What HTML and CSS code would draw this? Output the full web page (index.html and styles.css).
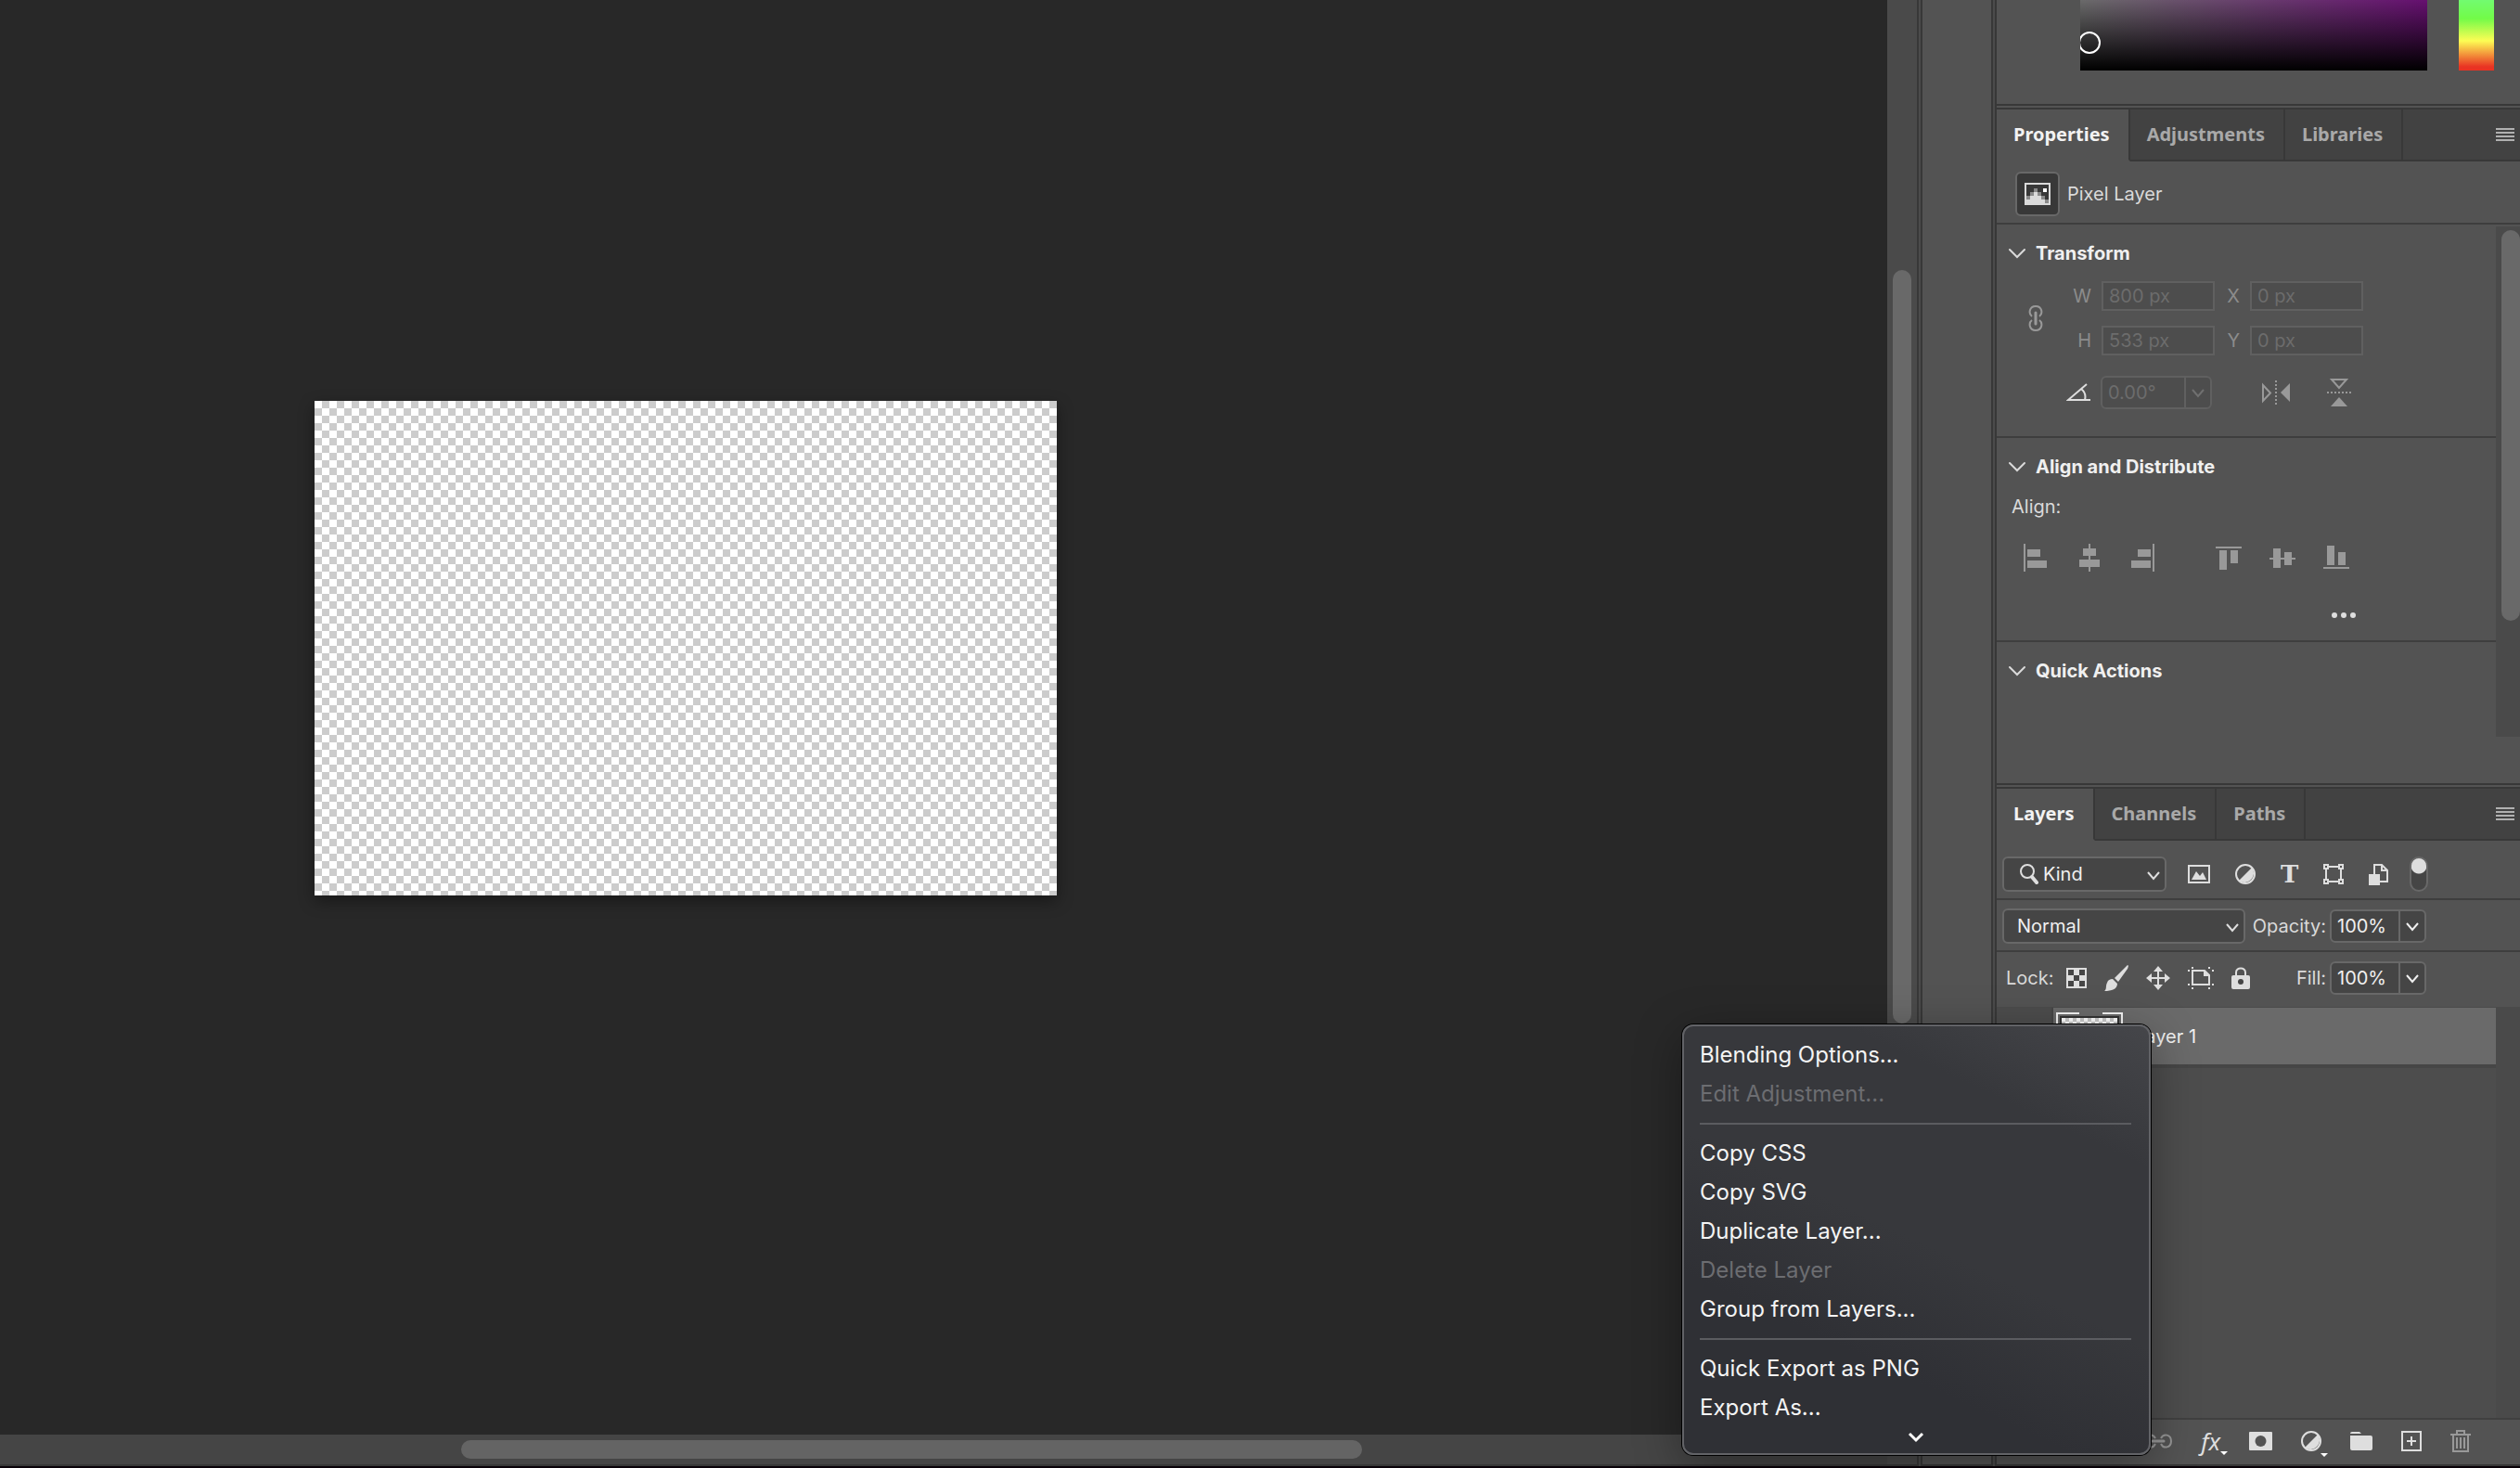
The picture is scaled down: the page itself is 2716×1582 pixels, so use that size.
FILE: index.html
```html
<!DOCTYPE html>
<html lang="en">
<head>
<meta charset="utf-8">
<meta name="viewport" content="width=device-width, initial-scale=1">
<title>Image editor</title>
<link rel="stylesheet" href="styles.css">
</head>
<body>
<div class="app">
  <main class="document">
    <div class="pasteboard"><div class="artboard"></div></div>
    <div class="track track-y"><div class="thumb thumb-y"></div></div>
    <div class="track track-x"><div class="thumb thumb-x"></div></div>
    <div class="track-corner"></div>
  </main>
  <div class="divider"></div>
  <div class="dock"></div>
  <div class="divider"></div>
  <aside class="panels">
    <section class="color-panel" aria-label="Color">
      <div class="color-field"><div class="color-marker"></div></div>
      <div class="hue-strip"></div>
    </section>
    <section class="properties">
      <div class="tabs" role="tablist">
        <button class="tab active" role="tab" aria-selected="true">Properties</button>
        <button class="tab" role="tab">Adjustments</button>
        <button class="tab" role="tab">Libraries</button>
        <button class="panel-menu" aria-label="Properties menu"><svg width="20" height="14"><path d="M0 1h20M0 5h20M0 9h20M0 13h20" stroke="#b0b0b0" stroke-width="2"/></svg></button>
      </div>
      <div class="layer-kind">
        <span class="kind-icon"><svg width="28" height="24" viewBox="0 0 28 24"><path d="M1 1h26v22H1z" fill="none" stroke="#dadada" stroke-width="2"/><path d="M2 22v-4h4v-4h4v-4h4v4h4v4h4v4z" fill="#dadada"/><path d="M10 6h4v4h-4zM6 10h4v4H6zM14 10h4v4h-4zM2 14h4v4H2zM18 14h4v4h-4zM22 18h4v4h-4z" fill="#8a8a8a"/><path d="M20 6h4v4h-4z" fill="#fff"/></svg></span>
        <span>Pixel Layer</span>
      </div>
      <div class="properties-body">
        <div class="property-groups">
          <section class="group transform">
            <button class="group-title"><svg width="18" height="12"><path d="M1 2l8 8 8-8" class="line"/></svg>Transform</button>
            <div class="transform-fields">
              <button class="link-size" aria-label="Link width and height"><svg width="16" height="30" viewBox="0 0 16 30"><path d="M4 13C0 10 1 2 8 2s8 8 4 11M4 17c-4 3-3 11 4 11s8-8 4-11" fill="none" stroke="#999" stroke-width="2"/><path d="M8 9v12" stroke="#999" stroke-width="3" stroke-linecap="round"/></svg></button>
              <label for="w">W</label><input id="w" value="800 px" disabled>
              <label for="x" class="second">X</label><input id="x" value="0 px" disabled>
              <label for="h">H</label><input id="h" value="533 px" disabled>
              <label for="y" class="second">Y</label><input id="y" value="0 px" disabled>
            </div>
            <div class="rotate-row">
              <label for="angle" aria-label="Angle"><svg width="26" height="20" viewBox="0 0 26 20"><path d="M22 1L2 18h24M16 6c4 3 5 8 4 12" fill="none" stroke="#dedede" stroke-width="2"/></svg></label>
              <span class="combo disabled"><input id="angle" value="0.00°" disabled><button disabled aria-label="Angle presets"><svg width="14" height="10"><path d="M1 1l6 7 6-7" class="line"/></svg></button></span>
              <button class="flip-x" aria-label="Flip horizontal"><svg width="30" height="28" viewBox="0 0 30 28"><path d="M1 6v17l8-8.500z" fill="none" stroke="#999" stroke-width="2"/><path d="M30 4v20l-10-10z" fill="#999"/><path d="M15 1v26" stroke="#999" stroke-width="2" stroke-dasharray="2 2"/></svg></button>
              <button aria-label="Flip vertical"><svg width="26" height="30" viewBox="0 0 26 30"><path d="M5 1h16l-8 9z" fill="none" stroke="#999" stroke-width="2"/><path d="M4 30h18l-9-10z" fill="#999"/><path d="M0 15h26" stroke="#999" stroke-width="2" stroke-dasharray="2 2"/></svg></button>
            </div>
          </section>
          <section class="group align">
            <button class="group-title"><svg width="18" height="12"><path d="M1 2l8 8 8-8" class="line"/></svg>Align and Distribute</button>
            <p>Align:</p>
            <div class="align-row">
              <button aria-label="Align left edges"><svg width="30" height="30"><path d="M2 0h2v30H2zM6 6h14v8H6zM6 18h21v8H6z"/></svg></button>
              <button aria-label="Align horizontal centers"><svg width="30" height="30"><path d="M14 0h2v30h-2zM8 5h14v8H8zM4 17h22v8H4z"/></svg></button>
              <button aria-label="Align right edges"><svg width="30" height="30"><path d="M25 0h2v30h-2zM9 6h14v8H9zM2 18h21v8H2z"/></svg></button>
              <button class="split" aria-label="Align top edges"><svg width="30" height="30"><path d="M1 3h28v2H1zM5 7h8v21H5zM17 7h8v14h-8z"/></svg></button>
              <button aria-label="Align vertical centers"><svg width="30" height="30"><path d="M1 15h28v2H1zM5 5h8v21H5zM17 9h8v14h-8z"/></svg></button>
              <button aria-label="Align bottom edges"><svg width="30" height="30"><path d="M1 25h28v2H1zM5 2h8v21H5zM17 9h8v14h-8z"/></svg></button>
            </div>
            <button class="more" aria-label="More options"><svg width="26" height="6"><circle cx="3" cy="3" r="3"/><circle cx="13" cy="3" r="3"/><circle cx="23" cy="3" r="3"/></svg></button>
          </section>
          <section class="group">
            <button class="group-title"><svg width="18" height="12"><path d="M1 2l8 8 8-8" class="line"/></svg>Quick Actions</button>
          </section>
        </div>
        <div class="side-track"><div class="side-thumb"></div></div>
      </div>
    </section>
    <section class="layers">
      <div class="tabs" role="tablist">
        <button class="tab active" role="tab" aria-selected="true">Layers</button>
        <button class="tab" role="tab">Channels</button>
        <button class="tab" role="tab">Paths</button>
        <button class="panel-menu" aria-label="Layers menu"><svg width="20" height="14"><path d="M0 1h20M0 5h20M0 9h20M0 13h20" stroke="#b0b0b0" stroke-width="2"/></svg></button>
      </div>
      <div class="filter-row">
        <div class="picker kind">
          <svg class="lens" width="20" height="22" viewBox="0 0 20 22"><circle cx="8" cy="8" r="7" fill="none" stroke="#dedede" stroke-width="2"/><path d="M13 14l5 6" stroke="#dedede" stroke-width="4" stroke-linecap="round"/></svg>
          <select aria-label="Filter type"><option>Kind</option></select>
          <svg class="arrow" width="14" height="10"><path d="M1 1l6 7 6-7" class="line"/></svg>
        </div>
        <div class="filters">
          <button aria-label="Filter pixel layers"><svg width="24" height="22" viewBox="0 0 24 22"><path d="M1 2h22v18H1z" fill="none" stroke="#dedede" stroke-width="2"/><path d="M4 17l5-9 4 5 3-4 4 8z" fill="#dedede"/></svg></button>
          <button aria-label="Filter adjustment layers"><svg width="22" height="22" viewBox="0 0 22 22"><circle cx="11" cy="11" r="10" fill="none" stroke="#dedede" stroke-width="2"/><path d="M18 4A10 10 0 0 1 4 18z" fill="#dedede"/></svg></button>
          <button class="type" aria-label="Filter type layers">T</button>
          <button aria-label="Filter shape layers"><svg width="22" height="22" viewBox="0 0 22 22" fill="none" stroke="#dedede" stroke-width="2"><path d="M5 3h12M5 19h12M3 5v12M19 5v12"/><path d="M1 1h4v4H1zM17 1h4v4h-4zM1 17h4v4H1zM17 17h4v4h-4z" fill="#535353"/></svg></button>
          <button aria-label="Filter smart objects"><svg width="21" height="24" viewBox="0 0 21 24"><path d="M6 12V2h8l6 6v12h-8M14 2v6h6" fill="none" stroke="#dedede" stroke-width="2"/><path d="M0 12h12v12H0z" fill="#dedede"/></svg></button>
        </div>
        <input class="switch" type="checkbox" checked aria-label="Layer filtering">
      </div>
      <div class="blend-row">
        <div class="picker">
          <select aria-label="Blend mode"><option>Normal</option></select>
          <svg class="arrow" width="14" height="10"><path d="M1 1l6 7 6-7" class="line"/></svg>
        </div>
        <label for="opacity">Opacity:</label>
        <span class="combo"><input id="opacity" value="100%"><button aria-label="Opacity slider"><svg width="14" height="10"><path d="M1 1l6 7 6-7" class="line"/></svg></button></span>
      </div>
      <div class="lock-row">
        <span class="lock-label">Lock:</span>
        <div class="locks">
          <button aria-label="Lock transparent pixels"><svg width="22" height="24" viewBox="0 0 22 24"><path d="M0 1h22v22H0z" fill="#dedede"/><path d="M2 3h6v6H2zM14 3h6v6h-6zM8 9h6v6H8zM2 15h6v6H2zM14 15h6v6h-6z" fill="#454545"/></svg></button>
          <button aria-label="Lock image pixels"><svg width="26" height="28" viewBox="0 0 26 28" fill="#dedede"><path d="M25 0c1 0 1 2 0 4L15 18l-4-4z"/><path d="M9 15l5 5c0 6-6 8-14 8 3-2 1-5 3-9 1-3 3-4 6-4z"/></svg></button>
          <button aria-label="Lock position"><svg width="26" height="26" viewBox="0 0 26 26"><path d="M13 3v20M3 13h20" stroke="#dedede" stroke-width="2"/><path d="M13 0l5 6H8zM13 26l5-6H8zM0 13l6-5v10zM26 13l-6-5v10z" fill="#dedede"/></svg></button>
          <button aria-label="Lock artboard nesting"><svg width="28" height="24" viewBox="0 0 28 24"><path d="M5 4h13l5 5v10H5z" fill="none" stroke="#dedede" stroke-width="2"/><path d="M17 3l7 7h-7zM4 0h2v2H4zM22 0h2v2h-2zM0 3h2v2H0zM26 3h2v2h-2zM0 18h2v2H0zM26 18h2v2h-2zM4 22h2v2H4zM22 22h2v2h-2z" fill="#dedede"/></svg></button>
          <button aria-label="Lock all"><svg width="20" height="24" viewBox="0 0 20 24"><path d="M5 11V6c0-6 10-6 10 0v5" fill="none" stroke="#dedede" stroke-width="2"/><rect y="9" width="20" height="15" rx="2" fill="#dedede"/><circle cx="10" cy="16" r="3" fill="#454545"/></svg></button>
        </div>
        <label for="fill">Fill:</label>
        <span class="combo"><input id="fill" value="100%"><button aria-label="Fill slider"><svg width="14" height="10"><path d="M1 1l6 7 6-7" class="line"/></svg></button></span>
      </div>
      <div class="layer-list">
        <div class="layer">
          <div class="visibility"></div>
          <div class="layer-main"><span class="thumbnail"><span class="thumbnail-image"></span></span><span>Layer 1</span></div>
        </div>
      </div>
      <div class="layer-actions">
        <button aria-label="Link layers"><svg width="30" height="16" viewBox="0 0 30 16" fill="none" stroke="#959595"><path d="M12 5C9-1 1 1 1 8s8 9 11 3M18 5c3-6 11-4 11 3s-8 9-11 3" stroke-width="2"/><path d="M9 8h12" stroke-width="3" stroke-linecap="round"/></svg></button>
        <button class="fx drop" aria-label="Add a layer style">fx</button>
        <button aria-label="Add layer mask"><svg width="25" height="20" viewBox="0 0 25 20"><rect width="25" height="20" rx="1" fill="#dedede"/><circle cx="12.500" cy="10" r="6" fill="#535353"/></svg></button>
        <button class="drop" aria-label="New adjustment layer"><svg width="22" height="22" viewBox="0 0 22 22"><circle cx="11" cy="11" r="10" fill="none" stroke="#dedede" stroke-width="2"/><path d="M18 4A10 10 0 0 1 4 18z" fill="#dedede"/></svg></button>
        <button aria-label="New group"><svg width="24" height="20" viewBox="0 0 24 20" fill="#dedede"><path d="M0 2q0-2 2-2h8l2 2zM0 4h22q2 0 2 2v12q0 2-2 2H2q-2 0-2-2z"/></svg></button>
        <button aria-label="New layer"><svg width="22" height="22" viewBox="0 0 22 22"><path d="M1 1h20v20H1zM6 11h10M11 6v10" fill="none" stroke="#dedede" stroke-width="2"/></svg></button>
        <button aria-label="Delete layer"><svg width="22" height="24" viewBox="0 0 22 24" fill="none" stroke="#999" stroke-width="2"><path d="M0 5h22M7 5V1h8v4M3 5v18h16V5M7 8v12M11 8v12M15 8v12"/></svg></button>
      </div>
    </section>
  </aside>
</div>
<div class="context-menu" role="menu">
  <button role="menuitem">Blending Options...</button>
  <button role="menuitem" disabled>Edit Adjustment...</button>
  <hr>
  <button role="menuitem">Copy CSS</button>
  <button role="menuitem">Copy SVG</button>
  <button role="menuitem">Duplicate Layer...</button>
  <button role="menuitem" disabled>Delete Layer</button>
  <button role="menuitem">Group from Layers...</button>
  <hr>
  <button role="menuitem">Quick Export as PNG</button>
  <button role="menuitem">Export As...</button>
  <svg class="more-below" width="18" height="12"><path d="M2 2l7 7 7-7" fill="none" stroke="#fff" stroke-width="3"/></svg>
</div>
</body>
</html>
```
FILE: styles.css
```css
* { box-sizing: border-box; }
body { margin: 0; background: #000; color: #dadada; font: 20px/24px Inter, sans-serif; overflow: hidden; }
button, input, select { font: inherit; color: inherit; border: 0; margin: 0; padding: 0; background: none; border-radius: 0; }
input { min-width: 0; }
button { display: flex; align-items: center; }
svg { display: block; flex: none; }
p { margin: 0; }
.line { fill: none; stroke: currentColor; stroke-width: 2; }

.app { display: flex; height: 100vh; border-bottom: 2px solid #0a0309; }

/* Document window */
.document { flex: 1; display: grid; grid-template: 1fr 32px / 1fr 32px; border-bottom: 2px solid #373737; min-width: 0; }
.pasteboard { position: relative; background: #282828; overflow: hidden; }
.artboard { position: absolute; left: 339px; top: 432px; width: 800px; height: 533px; background: repeating-conic-gradient(#ccc 0 25%, #fff 0 50%) 0 0 / 16px 16px; box-shadow: 0 6px 16px rgba(0, 0, 0, .4); }
.track, .track-corner { background: #4a4a4a; }
.track-x { background: #454545; }
.thumb { background: #696969; border-radius: 10px; }
.track-y { padding: 291px 6px 0; }
.thumb-y { height: 812px; }
.track-x { padding: 6px 0 6px 497px; }
.thumb-x { width: 971px; height: 20px; background: #646464; }
.divider { width: 6px; background: #4b4b4b; border: solid #383838; border-width: 0 2px; }
.dock { width: 74px; background: #535353; border-bottom: 2px solid #373737; }

/* Panel column */
.panels { width: 564px; display: flex; flex-direction: column; background: #535353; border-bottom: 2px solid #373737; }
.color-panel { display: flex; height: 112px; padding-left: 90px; gap: 34px; }
.color-field { width: 374px; height: 76px; overflow: hidden; background: linear-gradient(to bottom, transparent, #000), linear-gradient(to right, #6a6a6a, #661070); }
.color-marker { width: 24px; height: 24px; margin: 34px 0 0 -2px; border: 2px solid #fff; border-radius: 50%; }
.hue-strip { width: 38px; height: 76px; background: linear-gradient(#72fb70, #72fb48 20px, #fdfd54 44px, #e93323 72px); }
.properties, .layers { border-top: 6px double #383838; display: flex; flex-direction: column; }
.tabs { display: flex; height: 56px; background: #424242; font: bold 20px/24px "Noto Sans", sans-serif; }
.tab { padding: 0 20px 0 18px; color: #a9a9a9; border: solid #383838; border-width: 0 2px 2px 0; }
.tab.active { background: #535353; color: #f2f2f2; border-bottom-color: #535353; }
.panel-menu { flex: 1; justify-content: flex-end; padding-right: 6px; border-bottom: 2px solid #383838; }
.layer-kind { display: flex; align-items: center; gap: 8px; height: 68px; padding: 3px 20px 0; border-bottom: 2px solid #3e3e3e; }
.kind-icon { display: grid; place-items: center; width: 48px; height: 48px; background: #383838; border: 2px solid #686868; border-radius: 6px; }
.properties-body { display: flex; height: 602px; }
.property-groups { flex: 1; }
.group { border-bottom: 2px solid #3e3e3e; }
.group:last-child { border: 0; }
.group-title { height: 62px; padding-left: 13px; gap: 11px; font-weight: 700; color: #f0f0f0; }
.group-title svg { color: #dadada; stroke-linecap: round; }
.transform { height: 230px; }
.transform-fields { display: grid; grid-template: 32px 32px / 40px 22px 122px 16px 122px; gap: 16px 11px; align-items: center; margin-top: -1px; padding-left: 29px; color: #8c8c8c; }
.transform-fields label { text-align: right; }
.transform-fields input { width: 100%; height: 32px; padding: 0 6px; background: #4d4d4d; border: 2px solid #606060; color: #6c6c6c; }
.link-size { grid-row: 1 / 3; padding-left: 5px; }
.rotate-row { display: flex; align-items: center; height: 36px; margin-top: 22px; padding-left: 75px; gap: 11px; }
.combo { display: flex; width: 104px; height: 36px; background: #454545; border: 2px solid #686868; border-radius: 6px; color: #f0f0f0; }
.combo input { flex: 1; padding-left: 6px; }
.combo button { width: 28px; justify-content: center; border-left: 2px solid #686868; }
.combo svg { margin-top: 2px; }
.combo.disabled { width: 120px; background: #4d4d4d; border-color: #606060; color: #6c6c6c; }
.combo.disabled button { border-color: #606060; color: #707070; }
.flip-x { margin: 0 29px 0 43px; }
.align { height: 220px; }
.align p { padding: 0 16px; }
.align-row { display: flex; gap: 28px; margin-top: 28px; padding-left: 27px; fill: #999; }
.split { margin-left: 34px; }
.more { margin: 44px 0 0 361px; fill: #dedede; }
.side-track { width: 26px; height: 550px; margin-top: 2px; padding: 4px 0 0 6px; background: #4a4a4a; }
.side-thumb { height: 421px; background: #696969; border-radius: 10px; }

/* Layers panel */
.layers { flex: 1; }
.filter-row, .blend-row { display: flex; align-items: center; border-bottom: 2px solid #3e3e3e; padding-left: 6px; }
.filter-row { height: 64px; padding-top: 10px; }
.picker { position: relative; display: flex; align-items: center; width: 262px; height: 38px; }
.picker select { appearance: none; width: 100%; height: 38px; padding: 0 14px; background: #454545; border: 2px solid #686868; border-radius: 6px; color: #f0f0f0; }
.picker.kind { width: 177px; }
.kind select { padding-left: 42px; }
.lens { position: absolute; left: 19px; }
.arrow { position: absolute; right: 7px; margin-top: 4px; color: #dedede; }
.filters { display: flex; align-items: center; gap: 27px; margin-left: 23px; color: #dedede; }
.type { font: bold 26px/26px "DejaVu Serif", serif; }
.switch { appearance: none; width: 20px; height: 38px; margin-left: 23px; border: 2px solid #686868; border-radius: 10px; background: radial-gradient(circle at 8px 8px, #dedede 8px, #454545 9px); }
.blend-row { height: 56px; padding-top: 2px; }
.blend-row label, .lock-row label { margin-left: auto; }
.blend-row .combo, .lock-row .combo { margin: 0 101px 0 4px; }
.lock-row { display: flex; align-items: center; height: 60px; padding: 0 0 4px 10px; border-bottom: 1px solid #4b4b4b; }
.locks { display: flex; align-items: center; gap: 19px; margin-left: 14px; }
.layer-list { flex: 1; background: #4d4d4d; border-right: 26px solid #4a4a4a; }
.layer { display: flex; height: 65px; border-bottom: 4px solid #464646; }
.visibility { width: 61px; border-right: 2px solid #464646; }
.layer-main { flex: 1; display: flex; align-items: center; gap: 13px; padding-left: 3px; background: #6a6a6a; color: #f0f0f0; }
.thumbnail { width: 72px; height: 52px; border: 2px solid #f4f4f4; border-width: 0 2px; padding: 4px 2px; background: linear-gradient(to right, #f4f4f4 23px, transparent 23px 48px, #f4f4f4 48px) top / 100% 2px no-repeat, linear-gradient(to right, #f4f4f4 23px, transparent 23px 48px, #f4f4f4 48px) bottom / 100% 2px no-repeat; }
.thumbnail-image { display: block; height: 44px; border: 2px solid #333; background: repeating-conic-gradient(#ccc 0 25%, #fff 0 50%) 0 0 / 8px 8px; }
.layer-actions { display: flex; justify-content: flex-end; align-items: center; gap: 31px; height: 50px; padding: 0 53px 2px 0; border-top: 2px solid #404040; }
.drop { position: relative; }
.drop::after { content: ""; position: absolute; left: 21px; top: 24px; border: 4px solid transparent; border-top-color: #fff; border-bottom: 0; }
.fx { font: italic 26px/26px "Noto Sans", sans-serif; color: #dedede; }

/* Layer context menu */
.context-menu { position: absolute; right: 398px; bottom: 14px; width: 505px; padding: 10px 19px 11px 17px; background: linear-gradient(205deg, #45464a, #37383c 22%, #37383c 50%, #2f3035 72%); border: 2px solid #626367; border-radius: 12px; box-shadow: 0 0 0 1px #000, 0 12px 50px rgba(0, 0, 0, .35); font-size: 24px; line-height: 42px; color: #f4f4f4; }
.context-menu button { width: 100%; height: 42px; }
.context-menu button:disabled { color: #6c6d71; }
.context-menu hr { height: 2px; margin: 10px 0; border: 0; background: #5b5c60; }
.more-below { margin: 5px auto 0; }
```
